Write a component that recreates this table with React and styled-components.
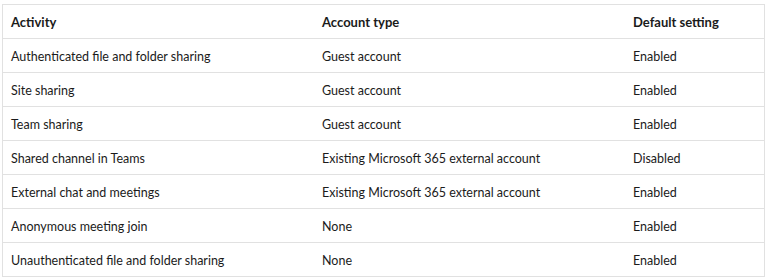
import React from "react";
import styled, { createGlobalStyle } from "styled-components";

const Global = createGlobalStyle`
  html, body { margin: 0; padding: 0; background: #fff; }
  body { font-family: "Segoe UI", Lato, "Open Sans", sans-serif; }
`;

const Wrap = styled.div`
  padding: 4px 0 0 2px;
  width: 763px;
`;

const Table = styled.table`
  width: 100%;
  table-layout: fixed;
  border-collapse: collapse;
  border: 1px solid #e1e1e1;
  font-size: 12.5px;
  color: #1b1b1b;
`;

const Row = styled.tr`
  height: 34px;
  border-bottom: 1px solid #e1e1e1;
`;

const Th = styled.th`
  text-align: left;
  font-weight: 700;
  font-size: 13px;
  padding: 0 0 0 8px;
  width: ${(p) => p.$w || "auto"};
`;

const Td = styled.td`
  padding: 2px 0 0 8px;
  font-weight: 400;
`;

const rows = [
  ["Authenticated file and folder sharing", "Guest account", "Enabled"],
  ["Site sharing", "Guest account", "Enabled"],
  ["Team sharing", "Guest account", "Enabled"],
  ["Shared channel in Teams", "Existing Microsoft 365 external account", "Disabled"],
  ["External chat and meetings", "Existing Microsoft 365 external account", "Enabled"],
  ["Anonymous meeting join", "None", "Enabled"],
  ["Unauthenticated file and folder sharing", "None", "Enabled"],
];

export default function App() {
  return (
    <Wrap>
      <Global />
      <Table>
        <thead>
          <Row>
            <Th $w="303px">Activity</Th>
            <Th $w="303px">Account type</Th>
            <Th>Default setting</Th>
          </Row>
        </thead>
        <tbody>
          {rows.map((r) => (
            <Row key={r[0]}>
              <Td>{r[0]}</Td>
              <Td>{r[1]}</Td>
              <Td>{r[2]}</Td>
            </Row>
          ))}
        </tbody>
      </Table>
    </Wrap>
  );
}
